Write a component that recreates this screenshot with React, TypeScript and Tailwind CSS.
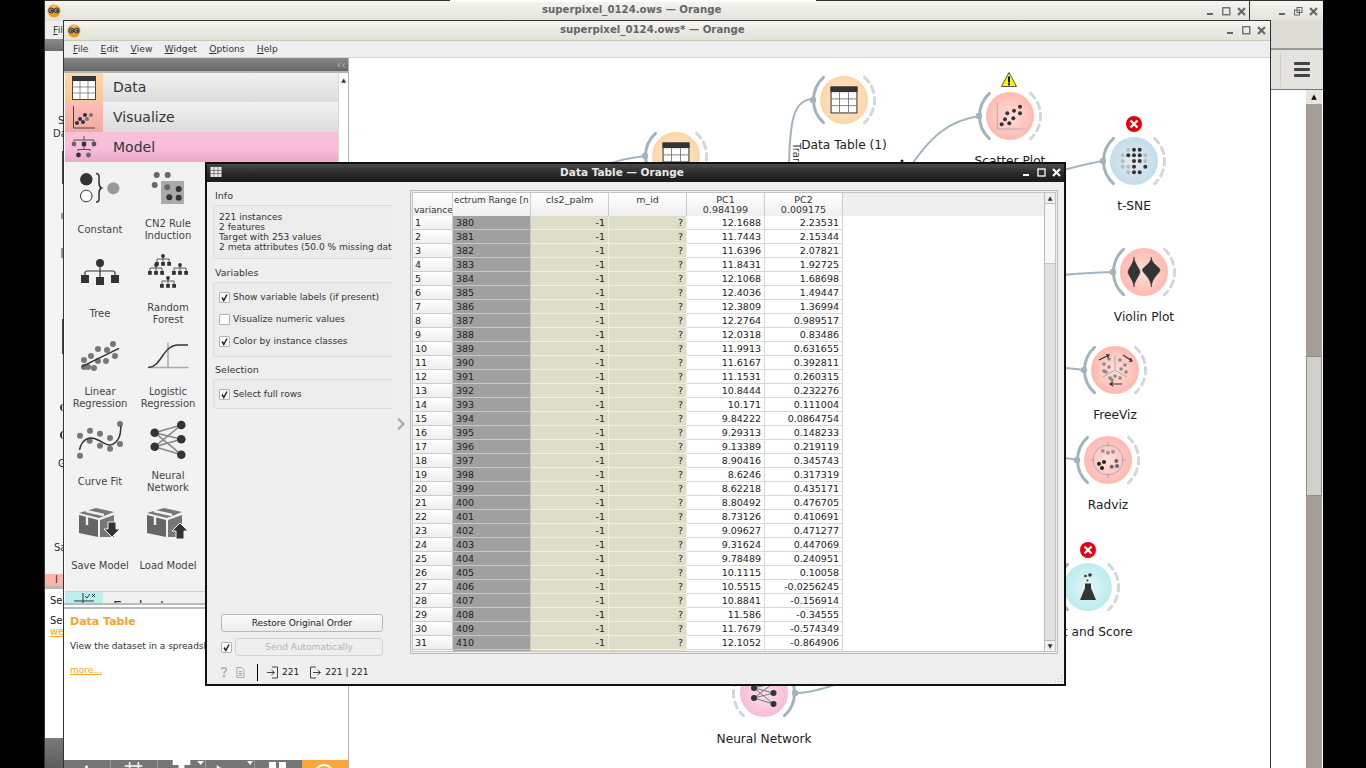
import React, { useId } from "react";

const rows: [string, string, string][] = [
  ["380", "12.1688", "2.23531"], ["381", "11.7443", "2.15344"], ["382", "11.6396", "2.07821"], ["383", "11.8431", "1.92725"],
  ["384", "12.1068", "1.68698"], ["385", "12.4036", "1.49447"], ["386", "12.3809", "1.36994"], ["387", "12.2764", "0.989517"],
  ["388", "12.0318", "0.83486"], ["389", "11.9913", "0.631655"], ["390", "11.6167", "0.392811"], ["391", "11.1531", "0.260315"],
  ["392", "10.8444", "0.232276"], ["393", "10.171", "0.111004"], ["394", "9.84222", "0.0864754"], ["395", "9.29313", "0.148233"],
  ["396", "9.13389", "0.219119"], ["397", "8.90416", "0.345743"], ["398", "8.6246", "0.317319"], ["399", "8.62218", "0.435171"],
  ["400", "8.80492", "0.476705"], ["401", "8.73126", "0.410691"], ["402", "9.09627", "0.471277"], ["403", "9.31624", "0.447069"],
  ["404", "9.78489", "0.240951"], ["405", "10.1115", "0.10058"], ["406", "10.5515", "-0.0256245"], ["407", "10.8841", "-0.156914"],
  ["408", "11.586", "-0.34555"], ["409", "11.7679", "-0.574349"], ["410", "12.1052", "-0.864906"], ["", "", ""],
];

function Logo() {
  return (
    <svg width="14" height="14" viewBox="0 0 14 14" className="shrink-0">
      <circle cx="7" cy="7" r="6.5" fill="#f29a1f" />
      <circle cx="7" cy="5" r="4" fill="#f7b64e" />
      <circle cx="4.3" cy="6.5" r="2.5" fill="#8d9494" stroke="#333" strokeWidth="1" />
      <circle cx="9.7" cy="6.5" r="2.5" fill="#8d9494" stroke="#333" strokeWidth="1" />
      <circle cx="4.8" cy="6.8" r="1" fill="#222" />
      <circle cx="10.2" cy="6.8" r="1" fill="#222" />
    </svg>
  );
}

function WinButtons({ color = "#666", restore = false, pad = "pr-[3px]" }: { color?: string; restore?: boolean; pad?: string }) {
  return (
    <div className={`flex items-center gap-[6px] ${pad}`}>
      <svg width="9" height="9" viewBox="0 0 9 9"><rect x="0" y="6" width="6" height="2" fill={color} /></svg>
      <svg width="9" height="9" viewBox="0 0 9 9">
        {restore ? (
          <g fill="none" stroke={color} strokeWidth="1"><rect x="0.5" y="3" width="5" height="5" /><rect x="3" y="0.5" width="5" height="5" /></g>
        ) : (
          <rect x="0.75" y="0.75" width="7" height="7" fill="none" stroke={color} strokeWidth="1.3" />
        )}
      </svg>
      <svg width="9" height="9" viewBox="0 0 9 9"><path d="M1 1 L8 8 M8 1 L1 8" stroke={color} strokeWidth="2.2" /></svg>
    </div>
  );
}

function TableIcon({ size, x = 0, y = 0 }: { size: number; x?: number; y?: number }) {
  const s = size;
  return (
    <g transform={`translate(${x} ${y}) scale(${s / 24})`}>
      <rect x="0.5" y="0.5" width="23" height="23" fill="#fff" stroke="#444" strokeWidth="1" />
      <rect x="0" y="0" width="24" height="5" fill="#333" />
      <path d="M8 5 V23 M16 5 V23 M0.5 11 H23.5 M0.5 17 H23.5" stroke="#777" strokeWidth="0.8" />
    </g>
  );
}

function MiniTree({ x, y }: { x: number; y: number }) {
  return (
    <g transform={`translate(${x} ${y})`} fill="#333">
      <circle cx="0" cy="-4" r="1.9" />
      <path d="M-6 2 V-1 H6 V2 M0 -4 V2" stroke="#333" strokeWidth="0.8" fill="none" />
      <rect x="-8" y="2" width="3.8" height="3.8" />
      <rect x="-1.9" y="2" width="3.8" height="3.8" />
      <rect x="4.2" y="2" width="3.8" height="3.8" />
    </g>
  );
}

function Box({ up }: { up?: boolean }) {
  return (
    <g>
      <path d="M3 15 L22 20 V37 L3 33 Z" fill="#666" />
      <path d="M24 20 L38 15 V37 L24 37 Z" fill="#777" />
      <path d="M3 13 L20 8 L38 12 L23 18 Z" fill="#777" />
      <path d="M11 16 V25 M10 11 L28 15" stroke="#f2f2f2" strokeWidth="2.4" fill="none" />
      {up ? (
        <path d="M32 39 V31 H28 L36 23 L44 31 H40 V39 Z" fill="#333" stroke="#f2f2f2" strokeWidth="1" />
      ) : (
        <path d="M32 22 H40 V29 H44 L36 37 L28 29 H32 Z" fill="#333" stroke="#f2f2f2" strokeWidth="1" />
      )}
    </g>
  );
}

const toolIcons: Record<string, React.ReactNode> = {
  Constant: (
    <>
      <circle cx="10.3" cy="15.3" r="6.2" fill="#333" />
      <circle cx="10.3" cy="32" r="5.8" fill="#fff" stroke="#333" strokeWidth="1" />
      <path d="M20 9.5 C24 9.5 23 13 23 17 C23 21 23 23 25.5 24 C23 25 23 27 23 31 C23 35 24 38 20 38" fill="none" stroke="#333" strokeWidth="1.5" />
      <circle cx="37.3" cy="24.3" r="6.1" fill="#999" />
    </>
  ),
  CN2: (
    <>
      <rect x="17" y="17" width="23" height="23" fill="#aaa" />
      <g fill="#666"><circle cx="12.7" cy="11" r="3" /><circle cx="23.7" cy="11" r="3" /><circle cx="10.7" cy="21" r="3" /><circle cx="23.3" cy="23.3" r="3" /></g>
      <g fill="#333"><circle cx="34.7" cy="25" r="3" /><circle cx="25.3" cy="33.3" r="3" /><circle cx="34.7" cy="33.7" r="3" /></g>
    </>
  ),
  Tree: (
    <g fill="#333">
      <circle cx="24" cy="15" r="4" />
      <path d="M9 31 V25 Q9 23 11 23 H37 Q39 23 39 25 V31 M24 15 V32" fill="none" stroke="#333" strokeWidth="1.2" />
      <rect x="5" y="27" width="8" height="8" /><rect x="20" y="29" width="8" height="8" /><rect x="35" y="27" width="8" height="8" />
    </g>
  ),
  Forest: (
    <>
      <MiniTree x={19} y={12} /><MiniTree x={12} y={21} /><MiniTree x={36} y={21} /><MiniTree x={24} y={34} />
    </>
  ),
  Linear: (
    <>
      <g fill="#777">
        {[[8, 28], [15, 24], [22, 17], [31, 18], [37, 12], [39, 24], [30, 29], [22, 29], [12, 35], [8, 35], [18, 36]].map(([x, y], i) => (
          <circle key={i} cx={x} cy={y} r="3" />
        ))}
      </g>
      <path d="M5.7 34.7 L43 16.3" stroke="#333" strokeWidth="1.5" />
    </>
  ),
  Logistic: (
    <>
      <path d="M4 35.5 H44.5 M24 10.5 V36" stroke="#aaa" strokeWidth="1.5" fill="none" />
      <path d="M4.3 35.5 C17 35.5 19 13 34 13 H44" stroke="#333" strokeWidth="1.5" fill="none" />
    </>
  ),
  Curve: (
    <>
      <g fill="#777">
        {[[4, 19.7], [14, 14.7], [24, 17.7], [34, 22], [44, 8], [13.7, 24.7], [24, 29.7], [34, 32.7], [44, 28], [4, 39.7]].map(([x, y], i) => (
          <circle key={i} cx={x} cy={y} r="3" />
        ))}
      </g>
      <path d="M3.5 34 C6 22 14 20 22 24 S34 32 40 26 S44 14 45 10" stroke="#333" strokeWidth="1.5" fill="none" />
    </>
  ),
  Neural: (
    <>
      <g stroke="#888" strokeWidth="1.6">
        {[16.7, 30.7].map((a) => [9, 23.3, 38.7].map((b) => <path key={a + "-" + b} d={`M10.7 ${a} L37.3 ${b}`} />))}
      </g>
      <g fill="#333">
        <circle cx="10.7" cy="16.7" r="4.3" /><circle cx="10.7" cy="30.7" r="4.3" />
        <circle cx="37.3" cy="9" r="4.3" /><circle cx="37.3" cy="23.3" r="4.3" /><circle cx="37.3" cy="38.7" r="4.3" />
      </g>
    </>
  ),
  Save: <Box />,
  Load: <Box up />,
};

const tools: [string, string[]][] = [
  ["Constant", ["Constant"]], ["CN2", ["CN2 Rule", "Induction"]],
  ["Tree", ["Tree"]], ["Forest", ["Random", "Forest"]],
  ["Linear", ["Linear", "Regression"]], ["Logistic", ["Logistic", "Regression"]],
  ["Curve", ["Curve Fit"]], ["Neural", ["Neural", "Network"]],
  ["Save", ["Save Model"]], ["Load", ["Load Model"]],
];

function Tab({ title, iconBg, children, active, short }: { title: string; iconBg: string; children: React.ReactNode; active?: boolean; short?: boolean }) {
  return (
    <div className={`flex ${short ? "h-[29px]" : "h-[30px]"} shrink-0 ${active ? "bg-gradient-to-b from-[#f9bfd9] via-[#f9bfd9] to-[#e8aac8]" : "bg-gradient-to-b from-[#f2f2f2] to-[#dcdcdc]"}`}>
      <div className={`w-[38px] h-full flex items-center justify-center ${iconBg}`}>{children}</div>
      <span className={`pl-[10px] text-[14px] text-[#333] ${short ? "leading-[29px]" : "leading-[31px]"}`}>{title}</span>
    </div>
  );
}

type Tone = { c: string; e: string };
const tones: Record<string, Tone> = {
  data: { c: "#fdeedb", e: "#fdd5a4" },
  vis: { c: "#ffdfda", e: "#ffb9b0" },
  tsne: { c: "#e3edf3", e: "#c3dcec" },
  test: { c: "#e4f5f5", e: "#bcecee" },
  model: { c: "#fbe2ee", e: "#f8bcd8" },
};

function Node({ x, y, labelY, label, tone, flip, badge, children }: { x: number; y: number; labelY: number; label: string; tone: string; flip?: boolean; badge?: "err" | "warn"; children: React.ReactNode }) {
  const id = useId();
  const t = tones[tone];
  const solid = "M-20.5 -22.7 A30.7 30.7 0 0 0 -20.5 22.7";
  const dash = "M20.5 -22.7 A30.7 30.7 0 0 1 20.5 22.7";
  return (
    <>
      <svg width="100" height="100" viewBox="-50 -50 100 100" className="absolute" style={{ left: x - 349 - 50, top: y - 58 - 50 }}>
        <defs>
          <radialGradient id={id}>
            <stop offset="0" stopColor={t.c} />
            <stop offset="1" stopColor={t.e} />
          </radialGradient>
        </defs>
        <circle r="24" fill={`url(#${id})`} />
        <g transform={flip ? "scale(-1 1)" : undefined}>
          <path d={solid} fill="none" stroke="#a3b4be" strokeWidth="3" strokeLinecap="round" />
          <circle cx="-31" cy="0" r="3.2" fill="#a3b4be" />
          <path d={dash} fill="none" stroke="#cfd8dd" strokeWidth="3" strokeDasharray="6.5 5" strokeLinecap="round" />
        </g>
        {children}
        {badge === "err" && (
          <g transform="translate(0 -37)">
            <circle r="8" fill="#e9000b" />
            <path d="M-3.5 -3.5 L3.5 3.5 M3.5 -3.5 L-3.5 3.5" stroke="#fff" strokeWidth="2.4" />
          </g>
        )}
        {badge === "warn" && (
          <g transform="translate(-1 -36)">
            <path d="M0 -7.5 L7.5 6.5 H-7.5 Z" fill="#f8f800" stroke="#555" strokeWidth="1" strokeLinejoin="round" />
            <rect x="-1" y="-3.5" width="2" height="6" fill="#111" />
            <rect x="-1" y="3.3" width="2" height="2" fill="#111" />
          </g>
        )}
      </svg>
      <div className="absolute w-[160px] text-center text-[12.2px] leading-[16px] text-[#222] whitespace-nowrap" style={{ left: x - 349 - 80, top: labelY - 58 - 7 }}>
        {label}
      </div>
    </>
  );
}

function Check({ on }: { on?: boolean }) {
  return (
    <span className="w-[11px] h-[11px] shrink-0 border border-[#b4b4b4] bg-white rounded-[1px] flex items-center justify-center">
      {on && (
        <svg width="9" height="9" viewBox="0 0 9 9"><path d="M2 4.5 L3.8 7.5 L7 1.5" fill="none" stroke="#222" strokeWidth="1.5" /></svg>
      )}
    </span>
  );
}

function CheckRow({ label, on }: { label: string; on?: boolean }) {
  return (
    <div className="flex items-center h-[22px] gap-[2px] pl-[5px] text-[9.05px] whitespace-nowrap">
      <Check on={on} />
      <span className="pl-[1px]">{label}</span>
    </div>
  );
}

const sectionBox = "w-[190px] border border-[#dcdcdc] rounded-[3px] bg-[#ececec]";
const headCell = "shrink-0 bg-gradient-to-b from-white to-[#efefef] border-r border-[#ccc]";

export default function App() {
  return (
    <div className="relative w-[1366px] h-[768px] bg-black overflow-hidden font-['DejaVu_Sans',sans-serif]">
      {/* right-hand window behind */}
      <div className="absolute left-[1250px] top-0 w-[73px] h-[768px] flex flex-col bg-[#dcdbd6] overflow-hidden border-t border-[#333]">
        <div className="h-[20px] shrink-0 flex items-center justify-end bg-gradient-to-b from-[#f6f6f0] to-[#e2e2da]"><WinButtons restore pad="pr-[5px]" /></div>
        <div className="h-[29px] shrink-0 bg-[#dcdbd6] border-b-2 border-[#9a9a94]" />
        <div className="h-[40px] shrink-0 flex items-center justify-end bg-[#e4e3de] border-b border-[#777] pr-[13px]">
          <div className="w-px h-[34px] bg-[#cfcec9] mr-[13px]" />
          <div className="flex flex-col gap-[3px]">
            <span className="block w-[16px] h-[3px] bg-[#444] rounded-[1px]" />
            <span className="block w-[16px] h-[3px] bg-[#444] rounded-[1px]" />
            <span className="block w-[16px] h-[3px] bg-[#444] rounded-[1px]" />
          </div>
        </div>
        <div className="flex-1 flex bg-white">
          <div className="flex-1" />
          <div className="w-[16px] mr-px flex flex-col bg-[#a39f96]">
            <div className="h-[14px] bg-[#e6e5e0] flex items-center justify-center text-[7px] leading-none text-black">▲</div>
            <div className="mt-[252px] h-[140px] bg-[#d2d0ca] border border-[#8f8c84]" />
          </div>
        </div>
      </div>

      {/* window behind the main one */}
      <div className="absolute left-[44px] top-0 w-[1206px] h-[768px] flex flex-col bg-white border-l border-r border-t border-[#333] overflow-hidden">
        <div className="relative h-[20px] shrink-0 flex items-center justify-between bg-gradient-to-b from-[#f6f6f0] to-[#e2e2da] pl-[2px]">
          <Logo />
          <span className="absolute left-[497px] top-[1px] text-[10.2px] font-bold text-[#666] whitespace-nowrap">superpixel_0124.ows — Orange</span>
          <WinButtons />
        </div>
        <div className="h-[18px] shrink-0 bg-[#eeeeee] pl-[8px] text-[9.2px] leading-[18px] text-[#333]"><u>F</u>ile</div>
        <div className="h-[12px] shrink-0 bg-gradient-to-b from-[#8a8a8a] to-[#6c6c6c]" />
        <div className="relative h-[523px] shrink-0 bg-[#f4f4f4] text-[10px] text-[#333]">
          <span className="absolute left-[13px] top-[62px]">S</span>
          <span className="absolute left-[8px] top-[75px]">Da</span>
          <span className="absolute left-[17px] top-[100px] w-[2px] h-[33px] bg-[#444]" />
          <span className="absolute left-[16px] top-[162px] w-[3px] h-[6px] bg-[#999]" />
          <span className="absolute left-[16px] top-[197px] w-[3px] h-[10px] bg-[#999]" />
          <span className="absolute left-[17px] top-[268px] w-[2px] h-[35px] bg-[#444]" />
          <span className="absolute left-[15px] top-[353px] w-[4px] h-[7px] rounded-l-full border-l-2 border-[#333]" />
          <span className="absolute left-[15px] top-[380px] w-[4px] h-[8px] rounded-l-full border-l-2 border-[#333]" />
          <span className="absolute left-[13px] top-[405px]">G</span>
          <span className="absolute left-[9px] top-[489px]">Sa</span>
        </div>
        <div className="h-[12px] shrink-0 bg-[#ffb4ab] pl-[10px] text-[10px] leading-[12px] text-[#333]">I</div>
        <div className="h-[3px] shrink-0 bg-[#b8b8b8]" />
        <div className="flex-1 bg-white pl-[5px] pt-[6px] text-[10px] text-[#222]">
          <div className="leading-[12px]">Sel</div>
          <div className="leading-[11px] mt-[8px]">See</div>
          <div className="leading-[11px] text-[#f5a623] underline">we</div>
        </div>
        <div className="h-[30px] shrink-0 bg-gradient-to-b from-[#7a7a7a] to-[#5c5c5c]" />
      </div>

      {/* main window */}
      <div className="absolute left-[63px] top-[20px] w-[1208px] h-[748px] flex flex-col bg-white border-l border-r border-t border-[#333] overflow-hidden">
        <div className="relative h-[20px] shrink-0 flex items-center justify-between bg-gradient-to-b from-[#f6f6f0] to-[#e2e2da] pl-[3px] border-b border-[#c9c9b8]">
          <Logo />
          <span className="absolute left-[496px] top-[1px] text-[10.2px] font-bold text-[#666] whitespace-nowrap">superpixel_0124.ows* — Orange</span>
          <WinButtons pad="pr-[4px]" />
        </div>
        <div className="h-[17px] shrink-0 flex items-center gap-[12.2px] bg-[#eeeeee] border-b border-[#d4d4d4] pl-[9px] text-[9.2px] text-[#333]">
          <span><u>F</u>ile</span>
          <span><u>E</u>dit</span>
          <span><u>V</u>iew</span>
          <span><u>W</u>idget</span>
          <span><u>O</u>ptions</span>
          <span><u>H</u>elp</span>
        </div>
        <div className="flex-1 flex min-h-0">
          {/* dock */}
          <div className="w-[285px] shrink-0 flex flex-col border-r border-[#b4b4b4] overflow-hidden">
            <div className="h-[13px] shrink-0 flex items-center justify-end pr-[2px] bg-gradient-to-b from-[#8a8a8a] to-[#666] text-[12px] leading-none text-[#aaa]">‹‹</div>
            <div className="h-[2px] shrink-0 bg-[#b4b4b4]" />
            <div className="flex flex-1 min-h-0">
              <div className="w-[273px] ml-px shrink-0 flex flex-col bg-[#f2f2f2] min-h-0">
                <Tab short title="Data" iconBg="bg-gradient-to-b from-[#fcd7a8] to-[#f7c98f]">
                  <svg width="24" height="24" viewBox="0 0 24 24"><TableIcon size={24} /></svg>
                </Tab>
                <Tab title="Visualize" iconBg="bg-gradient-to-b from-[#ffbeb4] to-[#f2a9a0]">
                  <svg width="24" height="24" viewBox="0 0 24 24">
                    <path d="M1.5 1 V23 H23" fill="none" stroke="#444" strokeWidth="1" />
                    <g fill="#333"><circle cx="5" cy="18" r="2" /><circle cx="11" cy="17" r="2" /><circle cx="8" cy="14" r="2" /><circle cx="13" cy="10" r="2" /></g>
                    <g fill="#777"><circle cx="15" cy="14" r="2" /><circle cx="19" cy="10" r="2" /></g>
                  </svg>
                </Tab>
                <Tab title="Model" active iconBg="">
                  <svg width="26" height="26" viewBox="0 0 26 26">
                    <path d="M13 2 V6 M3 7 V6 H23 V7 M13 12 V15 M7 17 V15.5 H19 V17" stroke="#333" strokeWidth="0.8" fill="none" />
                    <circle cx="3" cy="10" r="2.4" fill="#666" /><rect x="10.8" y="7.8" width="4.4" height="4.4" fill="#333" /><circle cx="23" cy="10" r="2.4" fill="#555" />
                    <circle cx="7.5" cy="21" r="2.4" fill="#333" /><circle cx="17.5" cy="21" r="2.4" fill="#666" />
                  </svg>
                </Tab>
                <div className="ml-px w-[136px] h-[429px] shrink-0 grid grid-cols-2 content-start">
                  {tools.map(([k, lines]) => (
                    <div key={k} className="w-[68px] h-[84px] flex flex-col items-center pt-[2px]">
                      <svg width="48" height="48" viewBox="0 0 48 48" className="shrink-0">{toolIcons[k]}</svg>
                      <div className="h-[34px] mt-px flex flex-col items-center justify-center text-[10px] leading-[12px] text-[#444] whitespace-nowrap">
                        {lines.map((l) => <span key={l}>{l}</span>)}
                      </div>
                    </div>
                  ))}
                </div>
                <div className="h-[12px] shrink-0 flex overflow-hidden border-t border-[#d0d0d0] bg-[#f0f0f0]">
                  <div className="w-[38px] bg-[#bdeeee] flex justify-center">
                    <svg width="24" height="11" viewBox="0 0 24 11">
                      <path d="M2 9 H22 M11 1 V11" stroke="#333" strokeWidth="1" />
                      <path d="M13 4 L15 6 L18 2 M20 2 L23 5 M23 2 L20 5" stroke="#333" strokeWidth="1" fill="none" />
                    </svg>
                  </div>
                  <span className="pl-[10px] text-[14px] leading-[29px] text-[#333]">Evaluate</span>
                </div>
              </div>
              <div className="flex-1 bg-white border-l border-[#d8d8d8] text-[6px] text-center leading-[14px] text-[#333]">▲</div>
            </div>
            <div className="h-[6px] shrink-0 bg-white border-y-2 border-[#b4bcbc]" />
            <div className="h-[151px] shrink-0 bg-white pl-[6px] pt-[6px] overflow-hidden whitespace-nowrap">
              <div className="text-[11px] leading-[13px] font-bold text-[#f9a327]">Data Table</div>
              <div className="text-[9px] leading-[12px] mt-[12px] text-[#333]">View the dataset in a spreadsheet.</div>
              <div className="text-[9px] leading-[12px] mt-[12px] text-[#f9a327] underline">more...</div>
            </div>
            <div className="h-[8px] shrink-0 flex bg-[#757575] overflow-hidden">
              <svg width="47" height="8" viewBox="0 0 47 8" className="border-r border-[#999]"><circle cx="23" cy="7" r="1.5" fill="#fff" /></svg>
              <svg width="47" height="8" viewBox="0 0 47 8" className="border-r border-[#999]"><path d="M19 2 V8 M28 2 V8 M14 6 H32" stroke="#fff" strokeWidth="1.5" /></svg>
              <svg width="48" height="8" viewBox="0 0 48 8" className="border-r border-[#999]"><path d="M15 0 H33 V5 H27 V8 H21 V5 H15 Z" fill="#fff" /><path d="M40 1 H47 L43.5 5 Z" fill="#fff" /></svg>
              <svg width="49" height="8" viewBox="0 0 49 8" className="border-r border-[#999]"><path d="M11 5 L15 8 H11 Z" fill="#fff" /><path d="M42 1 H48 L45 5 Z" fill="#fff" /></svg>
              <svg width="47" height="8" viewBox="0 0 47 8"><rect x="14" y="2" width="7" height="6" fill="#fff" /><rect x="24" y="2" width="7" height="6" fill="#fff" /></svg>
              <svg width="46" height="8" viewBox="0 0 46 8" className="bg-[#f9a63c]"><circle cx="22" cy="14" r="9" fill="none" stroke="#fff" strokeWidth="2" /></svg>
            </div>
          </div>

          {/* canvas */}
          <div className="relative flex-1 bg-white overflow-hidden">
            <svg className="absolute inset-0" width="921" height="710" viewBox="349 58 921 710">
              <g fill="none" stroke="#a3b4be" strokeWidth="2">
                <path d="M813 99 C795 100 789 115 789 175" />
                <path d="M644 156 C630 158 615 160 600 168" />
                <path d="M980 116 C950 120 930 135 905 175" />
                <path d="M1060 171 C1075 167 1090 163 1103 161" />
                <path d="M1060 275 C1080 274 1095 272 1113 272" />
                <path d="M1060 368 C1070 368 1075 369 1084 370" />
                <path d="M1060 458 C1070 458 1070 459 1077 460" />
                <path d="M796 693 C810 693 825 688 850 680" />
              </g>
              <circle cx="902" cy="161" r="1.5" fill="#222" />
            </svg>
            <span className="absolute left-[442px] top-[85px] text-[10px] leading-[10px] text-[#333] [writing-mode:vertical-rl]">Tran</span>

            <Node x={844} y={100} labelY={144} label="Data Table (1)" tone="data"><TableIcon size={27} x={-13.5} y={-13.5} /></Node>
            <Node x={676} y={156} labelY={200} label="Data Table" tone="data"><TableIcon size={27} x={-13.5} y={-13.5} /></Node>
            <Node x={1010} y={116} labelY={160} label="Scatter Plot" tone="vis" badge="warn">
              <path d="M-12.7 -13.3 V13 H13.3" fill="none" stroke="#aab4b8" strokeWidth="1" />
              <g fill="#333">
                {[[-2.7, -2.7], [4, -5.3], [10, -9.3], [10, -2.7], [3.3, 2.3], [-0.7, 7.3], [-5, 3.3], [-8.3, 8.3]].map(([x, y], i) => <circle key={i} cx={x} cy={y} r="2" />)}
              </g>
            </Node>
            <Node x={1134} y={161} labelY={205} label="t-SNE" tone="tsne" badge="err">
              <g fill="#bbb">
                {[[-5.7, -11.3], [-11.3, -5.7], [11.3, -5.7], [-11.3, 0], [11.3, 0], [-11.3, 5.7], [-5.7, 5.7], [-5.7, 11.3]].map(([x, y], i) => <circle key={i} cx={x} cy={y} r="2" />)}
              </g>
              <g fill="#333">
                {[[0, -11.3], [5.7, -11.3], [-5.7, -5.7], [0, -5.7], [5.7, -5.7], [0, 0], [5.7, 0], [0, 5.7], [11.3, 5.7], [0, 11.3], [5.7, 11.3]].map(([x, y], i) => <circle key={i} cx={x} cy={y} r="2" />)}
              </g>
            </Node>
            <Node x={1144} y={272} labelY={316} label="Violin Plot" tone="vis">
              <g fill="#333" stroke="#333" strokeWidth="0.6">
                <path d="M-10 -15 C-10 -9 -16 -3 -16 0 C-16 3 -10 9 -10 15 C-10 9 -4 3 -4 0 C-4 -3 -10 -9 -10 -15 Z" />
                <path d="M7.3 -15 C7.3 -8 -1.5 -5 -1.5 -2 C-1.5 1 7.3 6 7.3 15 C7.3 6 16 1 16 -2 C16 -5 7.3 -8 7.3 -15 Z" />
              </g>
            </Node>
            <Node x={1115} y={370} labelY={414} label="FreeViz" tone="vis">
              <path d="M0 0 V-14 M0 0 L-12 7 M0 0 L12 7" stroke="#aaa" strokeWidth="1" fill="none" />
              <g fill="#888">
                {[[-6, -11], [-11, -6], [-11, 1], [-9, 2], [-6, -3], [5, -10], [10, -5], [6, -1], [11, 2], [-5, 8], [0, 6], [5, 8], [-3, 10]].map(([x, y], i) => <circle key={i} cx={x} cy={y} r="1.8" />)}
              </g>
              <path d="M-16 -10 L-6 -15 M-9 -15.5 L-6 -15 L-7.5 -12 M8 -15 L17 -9 M14 -8.5 L17 -9 L15.5 -12 M-5 14 H7 M-2 12 L-5 14 L-2 16" stroke="#333" strokeWidth="1.2" fill="none" />
            </Node>
            <Node x={1108} y={460} labelY={504} label="Radviz" tone="vis">
              <circle r="15" fill="none" stroke="#aab" strokeWidth="1" />
              <path d="M0 -18 V-13 M0 13 V18 M-18 0 H-13 M13 0 H18" stroke="#aab" strokeWidth="1.2" />
              <g fill="#999"><circle cx="-5.3" cy="-9" r="2" /><circle cx="0" cy="-7.3" r="2" /><circle cx="5" cy="-8.3" r="2" /></g>
              <g fill="#666"><circle cx="8.3" cy="1" r="2" /><circle cx="3.7" cy="6.7" r="2" /><circle cx="9" cy="6" r="2" /></g>
              <g fill="#222"><circle cx="-9" cy="3.7" r="2" /><circle cx="-4" cy="2" r="2" /><circle cx="-6" cy="8" r="2" /></g>
            </Node>
            <Node x={1088} y={587} labelY={631} label="Test and Score" tone="test" badge="err">
              <path d="M-3 -3.5 H3 V1 L8 13 H-8 L-3 1 Z" fill="#333" />
              <circle cx="-2.5" cy="-11" r="1.3" fill="#333" /><circle cx="2" cy="-12" r="1.8" fill="#333" /><circle cx="-0.5" cy="-6.5" r="1" fill="#333" />
            </Node>
            <Node x={764} y={693} labelY={738} label="Neural Network" tone="model" flip>
              <g stroke="#777" strokeWidth="1">
                {[-5, 5].map((a) => [-10, 0, 11].map((b) => <path key={a + "/" + b} d={`M-10 ${a} L9.5 ${b}`} />))}
              </g>
              <g fill="#333">
                <circle cx="-10" cy="-5" r="3" /><circle cx="-10" cy="5" r="3" />
                <circle cx="9.5" cy="-11" r="3" /><circle cx="9.5" cy="0" r="3" /><circle cx="9.5" cy="11" r="3" />
              </g>
            </Node>
          </div>
        </div>
      </div>

      {/* Data Table dialog */}
      <div className="absolute left-[205px] top-[162px] w-[861px] h-[524px] flex flex-col border-[2px] border-[#111] bg-[#efefef] text-[9.05px] leading-[12px] text-[#333]">
        <div className="relative h-[18px] shrink-0 flex items-start pt-[1px] justify-between bg-gradient-to-b from-[#4a4a4a] via-[#2b2b2b] to-[#1a1a1a] pl-[3px]">
          <svg width="12" height="12" viewBox="0 0 12 12" className="mt-px">
            <rect x="0.5" y="1" width="11" height="10" fill="#eee" />
            <path d="M0 4.5 H12 M0 7.5 H12 M4 1 V11 M8 1 V11" stroke="#555" strokeWidth="0.7" />
          </svg>
          <span className="absolute left-0 right-[27px] top-[2px] text-center text-[10.5px] font-bold text-[#e8e8e8] whitespace-nowrap">Data Table — Orange</span>
          <div className="flex items-center gap-[6px] pr-[3px] pt-[3px]">
            <svg width="9" height="9" viewBox="0 0 9 9"><rect x="1" y="6" width="6" height="2" fill="#fff" /></svg>
            <svg width="9" height="9" viewBox="0 0 9 9"><rect x="1" y="1" width="7" height="7" fill="none" stroke="#fff" strokeWidth="1.3" /></svg>
            <svg width="9" height="9" viewBox="0 0 9 9"><path d="M1 1 L8 8 M8 1 L1 8" stroke="#fff" strokeWidth="2" /></svg>
          </div>
        </div>
        <div className="relative flex-1 flex min-h-0">
          {/* left controls */}
          <div className="w-[185px] shrink-0 flex flex-col overflow-hidden pl-[6px]">
            <div className="pl-[2px] mt-[8px] h-[12px] text-[9.5px]">Info</div>
            <div className={`${sectionBox} h-[54px] mt-[3px] pl-[5px] pt-[6px] leading-[10px] whitespace-nowrap`}>
              <div>221 instances</div>
              <div>2 features</div>
              <div>Target with 253 values</div>
              <div>2 meta attributes (50.0 % missing data)</div>
            </div>
            <div className="pl-[2px] mt-[8px] h-[12px] text-[9.5px]">Variables</div>
            <div className={`${sectionBox} h-[75px] mt-[3px] pt-[3px]`}>
              <CheckRow label="Show variable labels (if present)" on />
              <CheckRow label="Visualize numeric values" />
              <CheckRow label="Color by instance classes" on />
            </div>
            <div className="pl-[2px] mt-[7px] h-[12px] text-[9.5px]">Selection</div>
            <div className={`${sectionBox} h-[30px] mt-[3px] pt-[3px]`}>
              <CheckRow label="Select full rows" on />
            </div>
            <div className="flex-1" />
            <div className="ml-[8px] w-[162px] h-[18px] border border-[#b8b8b8] rounded-[3px] bg-gradient-to-b from-[#fbfbfb] to-[#ececec] text-center text-[9px] leading-[16px] text-[#222]">Restore Original Order</div>
            <div className="flex items-center mt-[6px] ml-[8px] h-[18px] gap-[3px]">
              <Check on />
              <div className="w-[148px] h-[18px] border border-[#d4d4d4] rounded-[3px] bg-[#efefef] text-center text-[9px] leading-[16px] text-[#b4b4b4]">Send Automatically</div>
            </div>
            <div className="h-[28px] shrink-0 flex items-center ml-[4px] pt-[4px] text-[#222]">
              <svg width="10" height="12" viewBox="0 0 12 14" className="ml-[2px]">
                <path d="M3 4 C3 1 9 1 9 4 C9 6 6 6 6 9" fill="none" stroke="#aaa" strokeWidth="1.8" />
                <circle cx="6" cy="12" r="1.4" fill="#aaa" />
              </svg>
              <svg width="9" height="11" viewBox="0 0 10 12" className="ml-[7px]">
                <path d="M1 .5 H6 L9 3.5 V11.5 H1 Z M3 5 H7 M3 7 H7 M3 9 H7" fill="none" stroke="#999" strokeWidth="0.9" />
              </svg>
              <span className="ml-[12px] w-px h-[17px] bg-black" />
              <svg width="12" height="13" viewBox="0 0 12 13" className="ml-[9px]">
                <path d="M5 1 H10.5 V12 H5 M0 6.5 H7 M4.5 4 L7.5 6.5 L4.5 9" fill="none" stroke="#444" strokeWidth="1" />
              </svg>
              <span className="ml-[3px]">221</span>
              <svg width="12" height="13" viewBox="0 0 12 13" className="ml-[10px]">
                <path d="M7 1 H1.5 V12 H7 M4 6.5 H11 M8.5 4 L11.5 6.5 L8.5 9" fill="none" stroke="#444" strokeWidth="1" />
              </svg>
              <span className="ml-[4px] whitespace-nowrap">221 | 221</span>
            </div>
          </div>
          {/* splitter */}
          <div className="w-[18px] shrink-0 flex items-center justify-center pb-[19px]">
            <svg width="10" height="14" viewBox="0 0 10 14"><path d="M2 1.5 L7.5 7 L2 12.5" fill="none" stroke="#aaa" strokeWidth="2.4" /></svg>
          </div>
          {/* table */}
          <div className="w-[648px] h-[464px] mt-[8px] shrink-0 border border-[#b8b8b8] p-px">
            <div className="w-full h-full flex border border-[#c4c4c4] bg-white overflow-hidden">
              <div className="flex-1 min-w-0 flex flex-col overflow-hidden">
                <div className="h-[23px] shrink-0 flex bg-[#efefef] text-[9.5px] leading-[10px]">
                  <div className={`w-[40px] ${headCell} flex items-end pl-px pb-[1px] text-[9px] overflow-hidden`}>variance</div>
                  <div className={`w-[78px] ${headCell} pt-[2px] pl-px text-[8.9px] whitespace-nowrap overflow-hidden`}>ectrum Range [n</div>
                  <div className={`w-[78px] ${headCell} pt-[2px] text-center`}>cls2_palm</div>
                  <div className={`w-[78px] ${headCell} pt-[2px] text-center`}>m_id</div>
                  <div className={`w-[78px] ${headCell} pt-[2px] text-center`}>PC1<br />0.984199</div>
                  <div className={`w-[78px] ${headCell} pt-[2px] text-center`}>PC2<br />0.009175</div>
                </div>
                <div className="flex-1 min-h-0 overflow-hidden text-[9.5px] leading-[13px] text-[#222]">
                  {rows.map((r, i) => (
                    <div key={i} className="h-[14px] flex">
                      <div className="w-[40px] shrink-0 bg-gradient-to-b from-white to-[#efefef] border-b border-r border-[#ccc] pl-[2px]">{r[0] ? i + 1 : ""}</div>
                      <div className="w-[78px] shrink-0 bg-[#a0a0a0] border-b border-r border-[#c8c8c8] pl-[3px]">{r[0]}</div>
                      <div className="w-[78px] shrink-0 bg-[#deddc9] border-b border-r border-[#efefe4] pr-[3px] text-right">{r[0] && "-1"}</div>
                      <div className="w-[78px] shrink-0 bg-[#deddc9] border-b border-r border-[#efefe4] pr-[3px] text-right">{r[0] && "?"}</div>
                      <div className="w-[78px] shrink-0 border-b border-r border-[#d8d8d8] pr-[3px] text-right">{r[1]}</div>
                      <div className="w-[78px] shrink-0 border-b border-r border-[#d8d8d8] pr-[3px] text-right">{r[2]}</div>
                    </div>
                  ))}
                </div>
              </div>
              <div className="w-[11px] shrink-0 flex flex-col bg-[#e2e2e2] border-l border-[#bbb]">
                <div className="h-[11px] bg-[#efefef] border-b border-[#bbb] text-[6px] leading-[10px] text-center text-[#333]">▲</div>
                <div className="h-[60px] bg-[#f6f6f6] border-b border-[#c4c4c4]" />
                <div className="flex-1" />
                <div className="h-[11px] bg-[#efefef] border-t border-[#bbb] text-[6px] leading-[10px] text-center text-[#333]">▼</div>
              </div>
            </div>
          </div>
          <svg width="10" height="10" viewBox="0 0 10 10" className="absolute right-0 bottom-0">
            <g fill="#bbb">
              <rect x="7" y="1" width="1" height="1" /><rect x="4" y="4" width="1" height="1" /><rect x="7" y="4" width="1" height="1" />
              <rect x="1" y="7" width="1" height="1" /><rect x="4" y="7" width="1" height="1" /><rect x="7" y="7" width="1" height="1" />
            </g>
          </svg>
        </div>
      </div>

      <div className="absolute left-[450px] top-0 w-[366px] h-[2px] bg-white" />
    </div>
  );
}
